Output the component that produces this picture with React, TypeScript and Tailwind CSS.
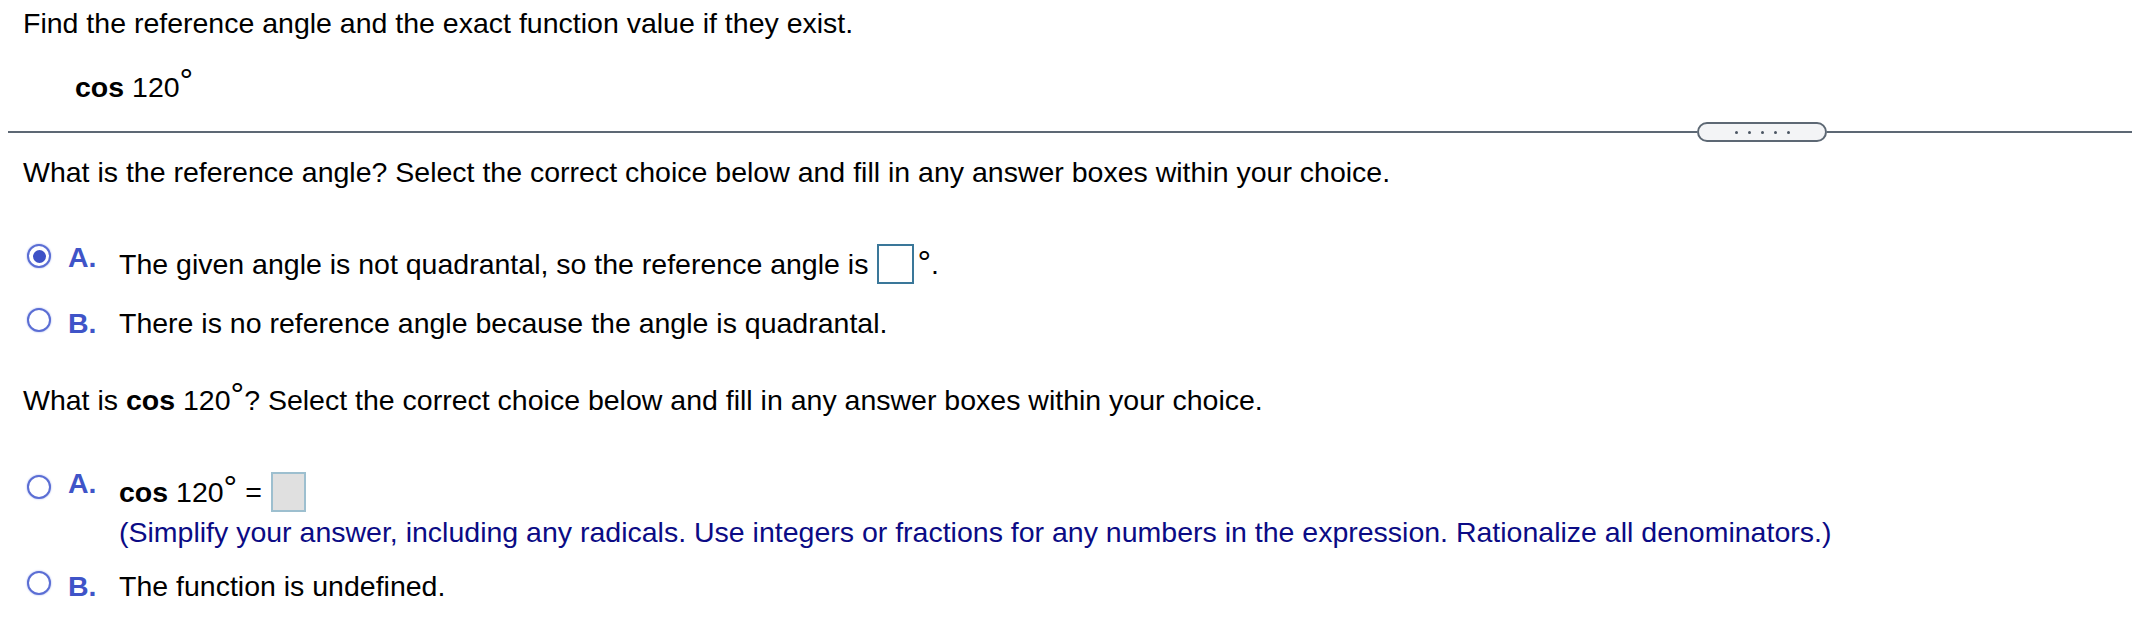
import React from 'react'

function Radio({ checked }: { checked?: boolean }) {
  return (
    <span className="flex h-[24px] w-[24px] shrink-0 items-center justify-center rounded-full border-2 border-[#5b6ed4] bg-white shadow-[0_0_2px_#9aa8ea]">
      {checked && <span className="h-[13px] w-[13px] rounded-full bg-[#3d51c6]" />}
    </span>
  )
}

// degree sign is drawn larger than the body text, like the original
function Deg({ up }: { up: string }) {
  return <span className={`relative text-[34px] leading-[0] ${up}`}>°</span>
}

export default function App() {
  return (
    <div className="min-h-screen bg-white font-['Liberation_Sans',Arial,sans-serif] text-[28.5px] leading-[30px] text-black">
      <div className="pt-[8px] pl-[23px]">Find the reference angle and the exact function value if they exist.</div>

      <div className="mt-[34px] pl-[75px]">
        <span className="font-bold">cos</span> 120
        <Deg up="-top-[5px]" />
      </div>

      {/* divider with handle */}
      <div className="mt-[20px] ml-[8px] flex h-[20px] items-center">
        <div className="h-[2px] flex-1 bg-[#5d6874]" />
        <div className="flex h-[20px] w-[130px] items-center justify-center gap-[10px] rounded-full border-2 border-[#5d6874] bg-[#f3f4f6]">
          <span className="h-[3px] w-[3px] rounded-full bg-[#4b5563]" />
          <span className="h-[3px] w-[3px] rounded-full bg-[#4b5563]" />
          <span className="h-[3px] w-[3px] rounded-full bg-[#4b5563]" />
          <span className="h-[3px] w-[3px] rounded-full bg-[#4b5563]" />
          <span className="h-[3px] w-[3px] rounded-full bg-[#4b5563]" />
        </div>
        <div className="h-[2px] w-[305px] bg-[#5d6874]" />
      </div>

      <div className="mt-[15px] pl-[23px]">
        What is the reference angle? Select the correct choice below and fill in any answer boxes within your choice.
      </div>

      {/* first set of choices */}
      <div className="mt-[57px] pl-[27px]">
        <div className="flex items-start">
          <Radio checked />
          <span className="-mt-[2px] ml-[17px] w-[51px] font-bold text-[#3f54c8]">A.</span>
          <div className="flex h-[40px] items-center">
            <span>The given angle is not quadrantal, so the reference angle is</span>
            <span className="ml-[9px] h-[40px] w-[37px] border-2 border-[#3a7799] bg-white" />
            <span className="ml-[3px]">
              <Deg up="top-0" />.
            </span>
          </div>
        </div>

        <div className="mt-[24px] flex items-start">
          <Radio />
          <span className="ml-[17px] w-[51px] font-bold text-[#3f54c8]">B.</span>
          <span>There is no reference angle because the angle is quadrantal.</span>
        </div>
      </div>

      <div className="mt-[47px] pl-[23px]">
        What is <span className="font-bold">cos</span> 120
        <Deg up="-top-[4px]" />? Select the correct choice below and fill in any answer boxes within your choice.
      </div>

      {/* second set of choices */}
      <div className="mt-[53px] pl-[27px]">
        <div className="flex items-start">
          <span className="mt-[7px]">
            <Radio />
          </span>
          <span className="ml-[17px] w-[51px] font-bold text-[#3f54c8]">A.</span>
          <div>
            <div className="mt-[4px] flex h-[40px] items-center">
              <span>
                <span className="font-bold">cos</span> 120
                <Deg up="-top-[3px]" /> =
              </span>
              <span className="ml-[9px] h-[40px] w-[35px] border-2 border-[#9dbfcf] bg-[#e0e0e0]" />
            </div>
            <div className="mt-[5px] text-[#0b0b85]">
              (Simplify your answer, including any radicals. Use integers or fractions for any numbers in the expression. Rationalize all denominators.)
            </div>
          </div>
        </div>

        <div className="mt-[24px] flex items-start">
          <Radio />
          <span className="ml-[17px] w-[51px] font-bold text-[#3f54c8]">B.</span>
          <span>The function is undefined.</span>
        </div>
      </div>
    </div>
  )
}
